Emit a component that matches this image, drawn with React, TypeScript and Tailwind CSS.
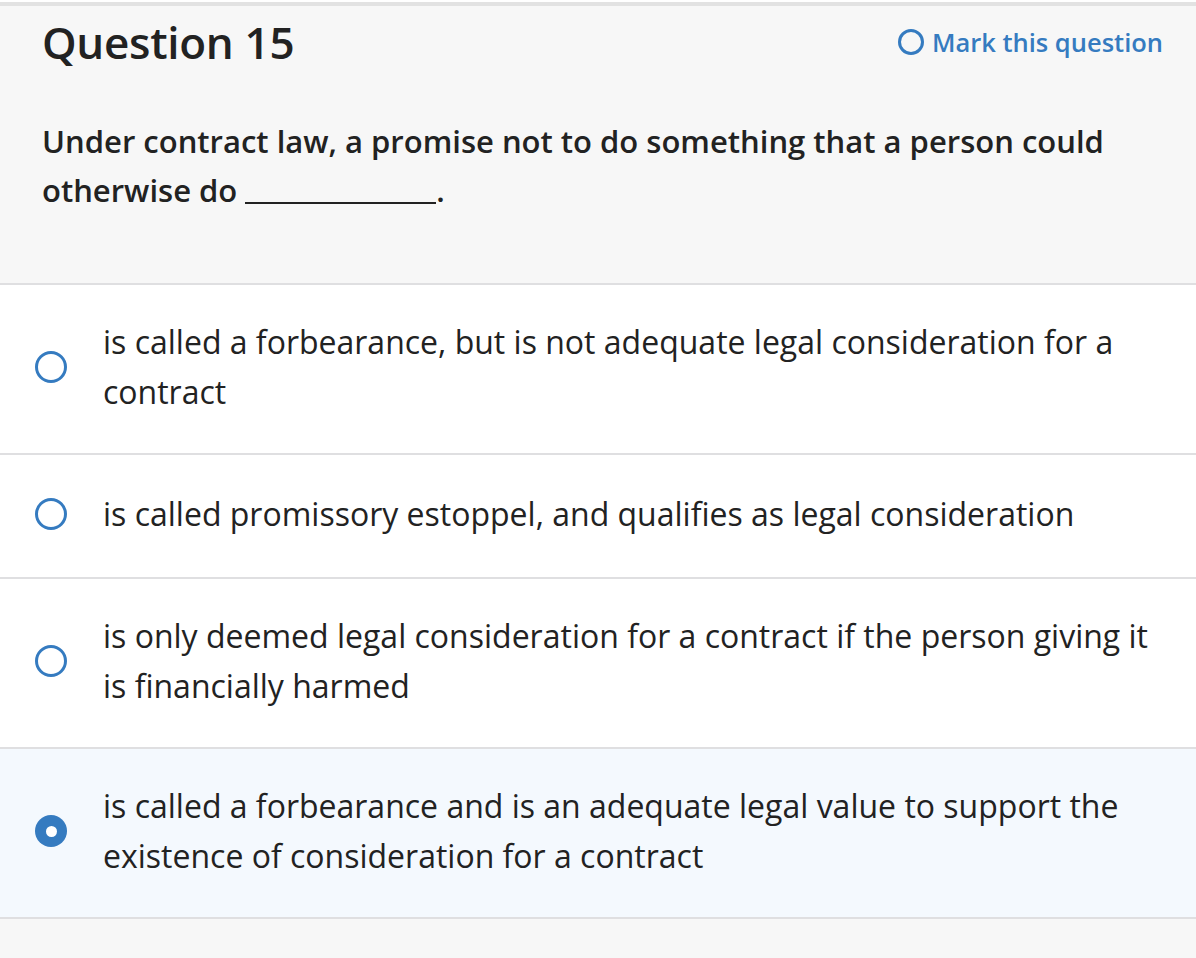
import React from 'react';

const options = [
  { text: 'is called a forbearance, but is not adequate legal consideration for a contract', selected: false },
  { text: 'is called promissory estoppel, and qualifies as legal consideration', selected: false },
  { text: 'is only deemed legal consideration for a contract if the person giving it is financially harmed', selected: false },
  { text: 'is called a forbearance and is an adequate legal value to support the existence of consideration for a contract', selected: true },
];

function Radio({ selected }: { selected: boolean }) {
  if (selected) {
    return (
      <div className="w-8 h-8 rounded-full bg-[#357bc0] flex items-center justify-center shrink-0">
        <div className="w-[11px] h-[11px] rounded-full bg-white" />
      </div>
    );
  }
  return <div className="w-8 h-8 rounded-full border-[3px] border-[#357bc0] bg-white shrink-0" />;
}

export default function App() {
  return (
    <div className="min-h-[958px] bg-[#f7f7f7] font-['Open_Sans',sans-serif] text-[#222]">
      <div className="h-[6px] border-t-2 border-white bg-[#e2e2e2]" />

      {/* Header */}
      <div className="px-[42px] pt-[12px] pb-[68px] border-b-2 border-[#dfdfe1]">
        <div className="flex items-start justify-between">
          <h1 className="text-[44px] leading-[48px] font-semibold tracking-[-0.3px]">Question 15</h1>
          <button className="flex items-center gap-[8px] mt-[9px] -mr-[9px] text-[#357bc0] text-[25.5px] font-semibold leading-[30px]">
            <span className="w-[26px] h-[26px] rounded-full border-[3px] border-[#357bc0]" />
            Mark this question
          </button>
        </div>
        <p className="mt-[51px] text-[31px] leading-[49px] font-semibold pr-[40px]">
          Under contract law, a promise not to do something that a person could otherwise do{' '}
          <span className="inline-block w-[191px] border-b-2 border-[#222] align-baseline translate-y-[2px]" />.
        </p>
      </div>

      {/* Options */}
      <div>
        {options.map((o) => (
          <div
            key={o.text}
            className={`flex items-center gap-[36px] pl-[35px] pr-[40px] pt-[32px] pb-[36px] min-h-[124px] border-b-2 border-[#dfdfe1] ${
              o.selected ? 'bg-[#f4f9fe]' : 'bg-white'
            }`}
          >
            <Radio selected={o.selected} />
            <p className="text-[32px] leading-[50px]">{o.text}</p>
          </div>
        ))}
      </div>
    </div>
  );
}
